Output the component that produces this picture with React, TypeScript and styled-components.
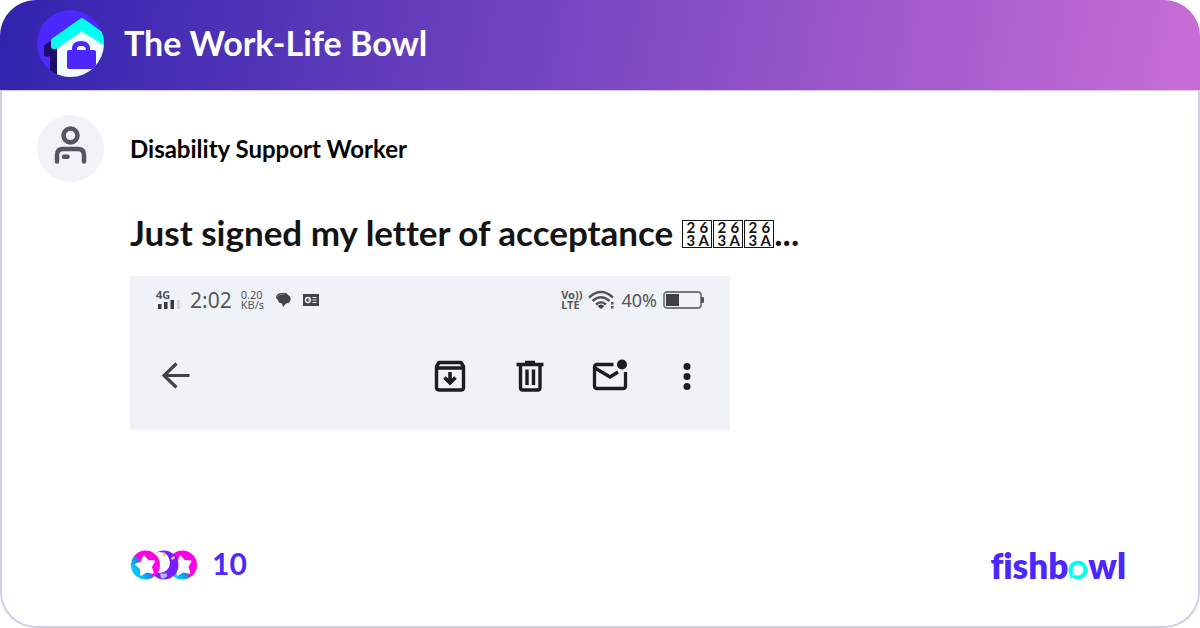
import React from 'react';
import styled, { createGlobalStyle } from 'styled-components';

const GlobalStyle = createGlobalStyle`
  *, *::before, *::after { box-sizing: border-box; }
  body {
    margin: 0;
    background: #fff;
    font-family: Lato, "Liberation Sans", sans-serif;
    font-variant-ligatures: none;
  }
`;

const Card = styled.article`
  display: flex;
  flex-direction: column;
  min-height: 100vh;
  border-radius: 36px;
  overflow: hidden;
  background: #fff;
  box-shadow: inset 0 0 0 2px #cfcde8;
`;

const Header = styled.header`
  display: flex;
  align-items: center;
  gap: 20px;
  height: 90px;
  padding: 0 36px 2px;
  background: linear-gradient(100deg, #3023ae, #c86dd7);
`;

const BowlTitle = styled.h1`
  margin: 0;
  padding-bottom: 3px;
  color: #fff;
  font-size: 34px;
  line-height: 44px;
  font-weight: 700;
`;

const Author = styled.div`
  display: flex;
  align-items: center;
  gap: 26px;
  padding: 23px 36px 0;
  border-top: 1px solid #d6cdee;
`;

const AuthorName = styled.span`
  padding-top: 2px;
  color: #000;
  font-size: 24px;
  line-height: 32px;
  font-weight: 700;
`;

const Post = styled.section`
  flex: 1;
  padding: 28px 36px 0 130px;
`;

const PostText = styled.p`
  display: flex;
  align-items: center;
  margin: 0 0 22px;
  color: #141414;
  font-size: 35px;
  line-height: 44px;
  font-weight: 700;
`;

const CodeBoxes = styled.span`
  display: flex;
  gap: 1px;
  padding-top: 3px;
  margin-left: 9px;
`;

const CodeBox = styled.span`
  display: grid;
  grid-template-columns: 13px 13px;
  grid-template-rows: 13px 13px;
  place-content: center;
  justify-items: center;
  width: 30px;
  height: 28px;
  border: 1px solid #141414;
  font-size: 15px;
  line-height: 13px;
`;

const Attachment = styled.figure`
  display: flex;
  flex-direction: column;
  width: 600px;
  max-width: 100%;
  height: 154px;
  margin: 0;
  background: #eff2f7;
`;

const StatusBar = styled.div`
  display: flex;
  justify-content: space-between;
  align-items: center;
  height: 48px;
  padding: 0 26px;
  color: #55565b;
  font-family: "Noto Sans", sans-serif;
`;

const StatusGroup = styled.div<{ $gap: number }>`
  display: flex;
  align-items: center;
  gap: ${(p) => p.$gap}px;
`;

const Stack = styled.span<{ $bold?: boolean }>`
  display: flex;
  flex-direction: column;
  font-size: 11px;
  line-height: 10px;
  font-weight: ${(p) => (p.$bold ? 700 : 400)};
`;

const StatusText = styled.span<{ $size: number }>`
  font-size: ${(p) => p.$size}px;
  line-height: 24px;
`;

const MailBar = styled.div`
  display: flex;
  align-items: center;
  height: 104px;
  padding: 0 22px 0 28px;
`;

const MailActions = styled.div`
  display: flex;
  align-items: center;
  gap: 44px;
  margin-left: auto;
`;

const IconButton = styled.button`
  display: flex;
  padding: 0;
  border: 0;
  background: none;
  color: #1d1d21;
  cursor: pointer;
`;

const Footer = styled.footer`
  display: flex;
  align-items: center;
  justify-content: space-between;
  padding: 0 74px 43px 130px;
`;

const Reactions = styled.div`
  display: flex;
  align-items: center;
  gap: 15px;
  color: #4c27ff;
`;

const ReactionCount = styled.span`
  padding-bottom: 4px;
  font-size: 30px;
  line-height: 36px;
  font-weight: 700;
`;

const Brand = styled.a`
  display: flex;
  align-items: baseline;
  color: #4c27ff;
  font-size: 35px;
  line-height: 40px;
  font-weight: 800;
  text-decoration: none;
`;

const BowlLogo = () => (
  <svg width="68" height="68" viewBox="0 0 68 68" aria-hidden="true">
    <defs>
      <clipPath id="bowl"><circle cx="34.5" cy="33.5" r="33.5" /></clipPath>
    </defs>
    <g clipPath="url(#bowl)">
      <rect width="68" height="68" fill="#4c27ff" />
      <path d="M8 37 Q8 35 10 34 L24 26 V70 H14 V46 Q8 48 8 44Z" fill="#1d0d66" />
      <path d="M21 36 L46 18 L70 34 V70 H21Z" fill="#f2fcff" />
      <path d="M17.500 30.500 46 10.500 74 30.500 V36.500 L46 18.500 19.500 36.500 H17.500Z" fill="#00fff0" stroke="#00fff0" strokeWidth="5" strokeLinejoin="round" />
      <path d="M38.500 42 V39 Q38.500 33.500 45 33.500 Q51.500 33.500 51.500 39 V42" fill="none" stroke="#4c27ff" strokeWidth="5" />
      <rect x="31" y="40" width="29" height="19" rx="2" fill="#4c27ff" />
      <path d="M41 40 Q41 36 45.500 36 Q50 36 50 40Z" fill="#f2fcff" />
    </g>
  </svg>
);

const Avatar = () => (
  <svg width="68" height="68" viewBox="0 0 68 68" aria-hidden="true">
    <circle cx="34.5" cy="34.5" r="33.5" fill="#f2f3f8" />
    <g fill="none" stroke="#5a5262" strokeWidth="4.500" strokeLinecap="round">
      <circle cx="34.5" cy="21.5" r="7" />
      <path d="M21 47.500 V41 Q21 35 27 35 H42 Q48 35 48 41 V47.500" />
      <path d="M28 42.800 H31.500" />
    </g>
  </svg>
);

const Signal = () => (
  <svg width="25" height="10" viewBox="0 0 25 10" aria-hidden="true">
    <path d="M2 4h3.500v5H2zM8 2h3.500v7H8zM14.500 0h3.500v9h-3.500z" fill="#38393e" />
    <path d="M21 0h3v9h-3z" fill="#d3d5da" />
  </svg>
);

const NoticeIcons = () => (
  <svg width="46" height="16" viewBox="-2 0 46 16" aria-hidden="true">
    <path d="M1 6 Q1 1 7 1 Q12 0 13 3 Q16 4 15.500 8 Q15 11 11 11.500 L8 15 L7 11.500 Q3 11 3 8Z" fill="#424348" />
    <path d="M1 5Q4 2 10 2" fill="none" stroke="#85868b" />
    <rect x="28" y="2" width="16" height="12" fill="#424348" />
    <circle cx="33" cy="8" r="2.5" fill="none" stroke="#eff2f7" strokeWidth="1.300" />
    <path d="M33 8h2.500M37.500 5.500h4M37.500 8h4M37.500 10.500h4" stroke="#eff2f7" strokeWidth="1.200" />
  </svg>
);

const Wifi = () => (
  <svg width="27" height="20" viewBox="0 0 27 20" aria-hidden="true">
    <g fill="none" stroke="#55565b" strokeWidth="2.400">
      <path d="M1 7.500 Q13 -3.500 25 7.500" />
      <path d="M4.500 11 Q13 3.500 21.500 11" />
      <path d="M8 14.500 Q13 10 18 14.500" />
    </g>
    <path d="M9.500 16 Q13 13 16.500 16 L13 19Z" fill="#424348" />
    <path d="M23 12h2.500v2.500H23zM23 16h2.500v2.500H23z" fill="#55565b" />
  </svg>
);

const Battery = () => (
  <svg width="41" height="18" viewBox="0 0 41 18" aria-hidden="true">
    <rect x="1" y="1" width="37" height="16" rx="3" fill="none" stroke="#77787d" strokeWidth="1.800" />
    <rect x="3" y="3" width="13" height="12" fill="#3f4045" />
    <path d="M38 6h2q1 0 1 1v4q0 1-1 1h-2z" fill="#55565b" />
  </svg>
);

const Back = () => (
  <svg width="36" height="36" viewBox="0 0 36 36" fill="none" stroke="#434347" strokeWidth="3.200" aria-hidden="true">
    <path d="M31.500 17.500H6M18.500 5.500 6 17.500 18.500 29.500" />
  </svg>
);

const Archive = () => (
  <svg width="36" height="36" viewBox="0 0 36 36" fill="none" stroke="currentColor" strokeWidth="3.400" strokeLinejoin="round" aria-hidden="true">
    <path d="M4.500 8.500 7 4.500H29L31.500 8.500V29.500Q31.500 32 29 32H7Q4.500 32 4.500 29.500ZM4.500 10H31.500" />
    <path d="M18 14V25M12.500 19.500 18 25 23.500 19.500" strokeWidth="3.600" strokeLinejoin="miter" />
  </svg>
);

const Trash = () => (
  <svg width="36" height="36" viewBox="0 0 36 36" fill="none" stroke="currentColor" strokeWidth="3.400" aria-hidden="true">
    <path d="M4.500 6.500H31.500M13 4.500H23M8.500 6.500V29.500Q8.500 32 11 32H25.500Q28 32 28 29.500V6.500M15 11.500V27M21.500 11.500V27" />
  </svg>
);

const Unread = () => (
  <svg width="36" height="36" viewBox="0 0 36 36" fill="none" stroke="currentColor" strokeWidth="3.300" aria-hidden="true">
    <path d="M21.500 6.500H5Q2.500 6.500 2.500 9V28Q2.500 30.500 5 30.500H31Q33.500 30.500 33.500 28V14" />
    <path d="M3 10 18 19 26 14" />
    <circle cx="30" cy="6.500" r="5" fill="currentColor" stroke="none" />
  </svg>
);

const More = () => (
  <svg width="36" height="36" viewBox="0 0 36 36" fill="currentColor" aria-hidden="true">
    <circle cx="15" cy="8.500" r="3.500" /><circle cx="15" cy="18.500" r="3.500" /><circle cx="15" cy="28.500" r="3.500" />
  </svg>
);

const star = 'M0 -8.500 L3 -3.500 L8.500 -2.500 L4.800 2 L5.500 7.800 L0 5.500 L-5.500 7.800 L-4.800 2 L-8.500 -2.500 L-3 -3.500Z';

const ReactionIcons = () => (
  <svg width="67" height="30" viewBox="-1 0 67 30" role="img" aria-label="Reactions">
    <defs>
      <linearGradient id="starFill" x1="0.100" y1="0.850" x2="0.900" y2="0.150">
        <stop offset="0.150" stopColor="#00c8f0" />
        <stop offset="0.400" stopColor="#2882e6" />
        <stop offset="0.480" stopColor="#ff00e6" />
      </linearGradient>
    </defs>
    <circle cx="51.5" cy="15" r="14.500" fill="url(#starFill)" />
    <path d={star} transform="translate(51 15.500) rotate(-10) scale(1.060)" fill="#fff" stroke="#fff" strokeWidth="2" strokeLinejoin="round" />
    <circle cx="33" cy="15" r="14.500" fill="#7a1fff" />
    <circle cx="28.5" cy="12.5" r="10.500" fill="#fff" />
    <path d="M33 2.500v4M40.500 9l3-2" stroke="#ffd43a" strokeWidth="2.200" />
    <path d="M29 23.500h7v3l-3 2h-3z" fill="#b0b5df" />
    <circle cx="14.5" cy="15" r="14.500" fill="url(#starFill)" />
    <path d={star} transform="translate(14.500 15.500) rotate(-10) scale(1.060)" fill="#fff" stroke="#fff" strokeWidth="2" strokeLinejoin="round" />
  </svg>
);

const BrandBowl = () => (
  <svg width="20" height="20" viewBox="0 0 20 20" role="img" aria-label="o">
    <circle cx="10" cy="11" r="7.500" fill="none" stroke="#00fff0" strokeWidth="4" />
    <path d="M2 19 3 13 8 18Z" fill="#00fff0" />
    <path d="M4 17 5 14.500 7 16.500Z" fill="#fff" />
  </svg>
);

const MissingGlyph = () => (
  <CodeBox>
    {['2', '6', '3', 'A'].map((c) => <span key={c}>{c}</span>)}
  </CodeBox>
);

export default function App() {
  return (
    <>
      <GlobalStyle />
      <Card>
        <Header>
          <BowlLogo />
          <BowlTitle>The Work-Life Bowl</BowlTitle>
        </Header>
        <Author>
          <Avatar />
          <AuthorName>Disability Support Worker</AuthorName>
        </Author>
        <Post>
          <PostText>
            <span>Just signed my letter of acceptance</span>
            <CodeBoxes><MissingGlyph /><MissingGlyph /><MissingGlyph /></CodeBoxes>
            <span>...</span>
          </PostText>
          <Attachment>
            <StatusBar>
              <StatusGroup $gap={9}>
                <Stack $bold><span>4G</span><Signal /></Stack>
                <StatusText $size={21}>2:02</StatusText>
                <Stack><span>0.20</span><span>KB/s</span></Stack>
                <NoticeIcons />
              </StatusGroup>
              <StatusGroup $gap={6}>
                <Stack $bold><span>Vo))</span><span>LTE</span></Stack>
                <Wifi />
                <StatusText $size={18}>40%</StatusText>
                <Battery />
              </StatusGroup>
            </StatusBar>
            <MailBar>
              <IconButton aria-label="Back"><Back /></IconButton>
              <MailActions>
                <IconButton aria-label="Archive"><Archive /></IconButton>
                <IconButton aria-label="Delete"><Trash /></IconButton>
                <IconButton aria-label="Mark unread"><Unread /></IconButton>
                <IconButton aria-label="More options"><More /></IconButton>
              </MailActions>
            </MailBar>
          </Attachment>
        </Post>
        <Footer>
          <Reactions><ReactionIcons /><ReactionCount>10</ReactionCount></Reactions>
          <Brand href="#"><span>fishb</span><BrandBowl /><span>wl</span></Brand>
        </Footer>
      </Card>
    </>
  );
}
